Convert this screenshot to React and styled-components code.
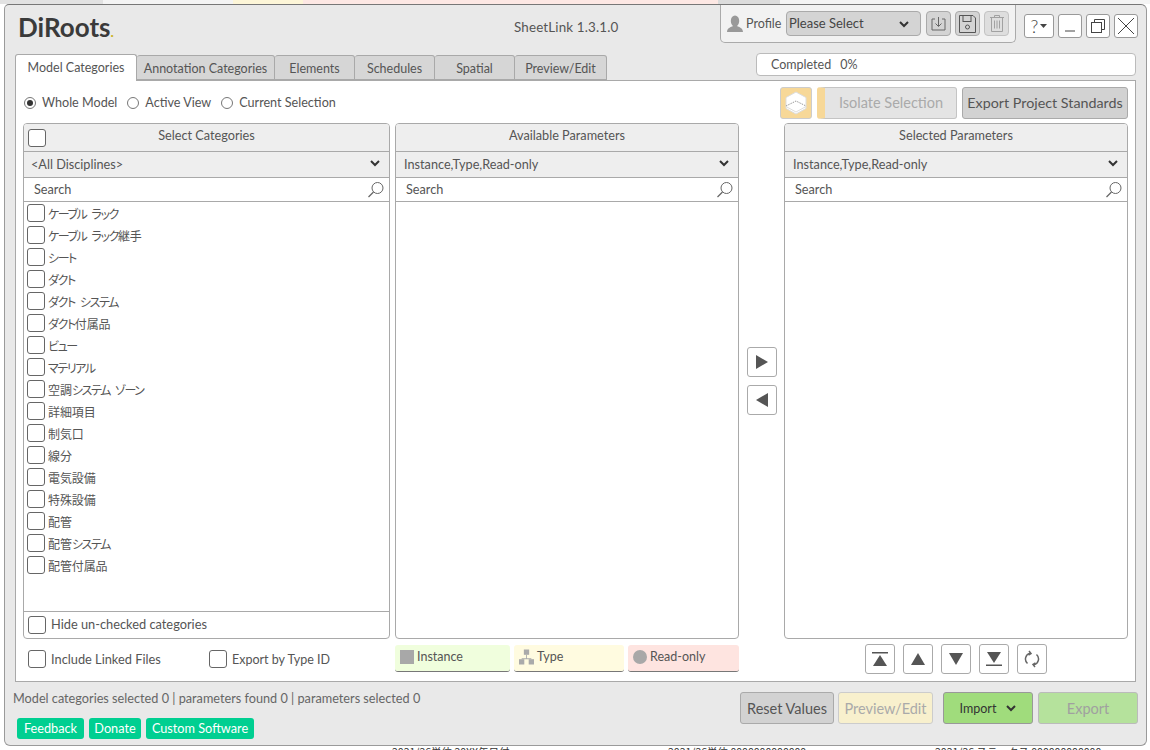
import React from "react";
import styled, { createGlobalStyle } from "styled-components";

const Global = createGlobalStyle`
  html, body { margin: 0; padding: 0; height: 750px; overflow: hidden; background: #fff; }
  body { font-family: "Lato", "Noto Sans CJK JP", sans-serif; font-size: 12.5px; color: #555; }
  * { box-sizing: border-box; }
`;

const Page = styled.div`
  width: 1150px; height: 750px; overflow: hidden; display: flex; flex-direction: column; background: #fff;
`;
const TopStrip = styled.div`display: flex; height: 4px; flex: none; background: #f4f4f4;`;
const StripPart = styled.div`
  flex: none; width: ${p => p.$w}px; background: ${p => p.$c};
`;
const Body = styled.div`flex: none; height: 742px; padding-left: 4px; background: #fff; position: relative;`;
const BottomStrip = styled.div`
  flex: none; height: 4px; overflow: hidden; display: flex; font: 10.500px/12px "Noto Sans CJK JP", sans-serif; color: #333;
  padding-left: 392px; white-space: nowrap;
`;
const StripText = styled.span`flex: none; width: ${p => p.$w}px;`;
const Window = styled.div`
  width: 1143px; height: 742px; background: #e9e9e9; border: 1px solid #9a9a9a; border-top-color: #777;
  border-radius: 5px 6px 6px 6px; display: flex; flex-direction: column; padding: 0 10px 0 10px;
`;
const TitleRow = styled.div`display: flex; align-items: flex-start; height: 48px; flex: none;`;
const Logo = styled.div`
  width: 499px; flex: none; padding: 7px 0 0 3px; font: 700 26px/30px "Lato", sans-serif; color: #3a3a3a;
  span { color: #c9b21e; font-size: 14px; }
`;
const AppTitle = styled.div`width: 206px; flex: none; font-size: 13.4px; color: #555; padding-top: 14px; letter-spacing: .15px;`;
const ProfileBox = styled.div`
  flex: none; width: 296px; height: 38px; border: 1px solid #aaa; border-top: none; border-radius: 0 0 5px 5px;
  background: #f2f2f2; display: flex; align-items: center; padding: 0 0 0 5px;
`;
const ProfileLabel = styled.span`margin-left: 2px; width: 38px; font-size: 12.5px; color: #555;`;
const ProfileSelect = styled.div`
  width: 135px; height: 25px; margin-left: 2px; margin-right: 5px; background: #d4d4d4; border: 1px solid #aaa; border-radius: 4px;
  display: flex; align-items: center; justify-content: space-between; padding: 0 11px 2px 2px; color: #444; font-size: 13px;
  svg { margin-top: 3px; }
`;
const SquareBtn = styled.div`
  width: 25px; height: 25px; margin-right: 4px; background: #d4d4d4; border: 1px solid #aaa; border-radius: 4px;
  display: flex; align-items: center; justify-content: center; opacity: ${p => p.$off ? .65 : 1};
`;
const WinControls = styled.div`display: flex; gap: 4px; margin: 9px 0 0 8px; flex: none;`;
const WinBtn = styled.div`
  width: ${p => p.$w || 24}px; height: 24px; background: #fff; border: 1px solid #999; border-radius: 3px;
  display: flex; align-items: center; justify-content: center; gap: 2px; font-size: 18px; font-weight: 300; color: #444;
`;
const TabRow = styled.div`display: flex; height: 27px; flex: none; align-items: flex-end; justify-content: space-between;`;
const Tabs = styled.div`display: flex; align-items: flex-end; height: 27px;`;
const Tab = styled.div`
  width: ${p => p.$w}px; height: ${p => p.$on ? 27 : 25}px; display: flex; align-items: center; justify-content: center;
  background: ${p => p.$on ? "#fff" : "#d6d6d6"}; border: 1px solid #a9a9a9; border-bottom: ${p => p.$on ? "none" : "1px solid #a9a9a9"};
  border-left: ${p => p.$first ? "1px solid #a9a9a9" : "none"}; border-radius: 3px 3px 0 0; font-size: 12.5px; color: #555;
  margin-bottom: ${p => p.$on ? -1 : 0}px; position: relative; z-index: ${p => p.$on ? 2 : 0}; padding-top: ${p => p.$on ? 0 : 2}px; padding-bottom: ${p => p.$on ? 2 : 0}px;
`;
const Progress = styled.div`
  width: 380px; height: 23px; margin-bottom: 4px; background: #fff; border: 1px solid #bbb; border-radius: 4px;
  padding: 0 14px; display: flex; align-items: center; gap: 9px; font-size: 12.5px; color: #555;
`;
const Panel = styled.div`
  width: 1121px; height: 602px; flex: none; background: #fff; border: 1px solid #a9a9a9; padding: 6px 7px 0 7px; display: flex; flex-direction: column;
`;
const ToolRow = styled.div`display: flex; align-items: center; justify-content: space-between; height: 32px; flex: none;`;
const Radios = styled.div`display: flex; align-items: center; gap: 10px; padding-left: 1px; margin-top: -1px;`;
const RadioItem = styled.label`display: flex; align-items: center; gap: 6px; color: #555; font-size: 12.6px;`;
const RadioDot = styled.span`
  width: 12px; height: 12px; border-radius: 50%; border: 1px solid #777; background: #fff; display: flex; align-items: center; justify-content: center; margin-top: 1px;
  &::after { content: ""; width: 6px; height: 6px; border-radius: 50%; background: ${p => p.$on ? "#333" : "transparent"}; }
`;
const ToolBtns = styled.div`display: flex; gap: 5px;`;
const HexBtn = styled.div`
  width: 32px; height: 32px; background: #f7d898; border: 1px solid #ccc; border-radius: 3px; display: flex; align-items: center; justify-content: center;
`;
const IsolateBtn = styled.div`
  width: 140px; height: 32px; border: 1px solid #c4c4c4; border-radius: 3px; background: #e4e4e4; color: #aaa; font-size: 14.5px;
  border-left: 8px solid #f7d898; display: flex; align-items: center; justify-content: center; padding: 0 0 2px 1px;
`;
const GrayBtn = styled.div`
  width: ${p => p.$w}px; height: 32px; border: 1px solid #aaa; border-radius: 3px; background: #d2d2d2; color: #555; font-size: 14.3px;
  display: flex; align-items: center; justify-content: center; padding-bottom: 2px;
`;
const Columns = styled.div`display: flex; height: 516px; margin-top: 4px; flex: none;`;
const ListBox = styled.div`
  width: ${p => p.$w}px; margin-right: ${p => p.$mr || 0}px; flex: none; height: 516px; border: 1px solid #a9a9a9; border-radius: 4px; display: flex; flex-direction: column; overflow: hidden;
`;
const ListHead = styled.div`
  height: 28px; flex: none; background: #eee; border-bottom: 1px solid #a9a9a9; display: flex; align-items: center; justify-content: center; color: #555; font-size: 12.7px; position: relative; padding-bottom: 5px;
`;
const HeadCheck = styled.div`position: absolute; left: 4px; top: 5px;`;
const Filter = styled.div`
  height: 26px; flex: none; background: #eee; border-bottom: 1px solid #a9a9a9; display: flex; align-items: center; justify-content: space-between; padding: 0 9px 2px ${p => p.$pl}px; color: #555; font-size: 12.7px;
`;
const SearchRow = styled.div`
  height: 24px; flex: none; background: #fff; border-bottom: 1px solid #a9a9a9; display: flex; align-items: center; justify-content: space-between; padding: 0 4px 2px 10px; color: #555; font-size: 12.7px;
  svg { margin-top: 2px; }
`;
const ListBody = styled.div`flex: 1; padding: 0 3px 0; overflow: hidden;`;
const Item = styled.div`height: 22px; display: flex; align-items: center; gap: 3px; font-family: "Noto Sans CJK JP", sans-serif; font-feature-settings: "palt"; font-weight: 400; font-size: 12px; color: #555; letter-spacing: -.1px;`;
const ItemLabel = styled.span`white-space: pre;`;
const Kana = styled.span`letter-spacing: -1.4px;`;
const WordGap = styled.span`display: inline-block; width: 5px;`;
const Check = styled.span`
  display: block; flex: none; width: 18px; height: 18px; background: #fff; border: 1px solid #666; border-radius: 3px;
`;
const ListFoot = styled.div`height: 27px; flex: none; border-top: 1px solid #a9a9a9; display: flex; align-items: center; gap: 5px; padding: 0 4px; color: #555; font-size: 12.8px;`;
const FootLabel = styled.span`margin-top: -2px;`;
const Arrows = styled.div`width: 45px; flex: none; display: flex; flex-direction: column; align-items: center; padding-top: 224px; gap: 8px;`;
const IconBtn = styled.div`
  width: 30px; height: 30px; background: #fff; border: 1px solid #aaa; border-radius: 3px; display: flex; align-items: center; justify-content: center; flex: none;
`;
const BottomRow = styled.div`display: flex; margin-top: 5px; height: 30px; flex: none;`;
const Options = styled.div`width: 372px; flex: none; display: flex; align-items: center; padding-left: 5px;`;
const OptionItem = styled.div`width: ${p => p.$w}px; flex: none; display: flex; align-items: center; gap: 5px; color: #555; font-size: ${p => p.$fs}px;`;
const Legend = styled.div`width: 344px; flex: none; height: 27px; display: flex; gap: 4px; margin-top: 1px;`;
const LegendItem = styled.div`
  width: ${p => p.$w}px; height: 27px; background: ${p => p.$c}; border-radius: 3px; border-bottom: 1px solid #777; padding: 4px 0 0 5px; display: flex; align-items: flex-start; gap: 3px; color: #555; font-size: 12.5px;
`;
const Movers = styled.div`flex: 1; display: flex; gap: 8px; padding-left: 126px;`;
const Status = styled.div`flex: none; height: 20px; margin: 6px 0 0 -2px; display: flex; align-items: center; color: #666; font-size: 12.7px;`;
const FootRow = styled.div`flex: none; display: flex; justify-content: space-between; height: 47px; margin-top: -16px;`;
const Pills = styled.div`display: flex; gap: 5px; padding: 26px 0 0 2px;`;
const Pill = styled.div`
  height: 21px; width: ${p => p.$w}px; background: #00cf91; color: #fff; border-radius: 3px; font-size: 12.7px; display: flex; align-items: center; justify-content: center; padding-bottom: 1px;
`;
const Actions = styled.div`display: flex; margin-right: -2px; height: 32px;`;
const ActionBtn = styled.div`
  width: ${p => p.$w}px; margin-right: ${p => p.$mr || 0}px; height: 32px; background: ${p => p.$bg}; color: ${p => p.$fg}; border: 1px solid ${p => p.$bd}; border-radius: 3px;
  display: flex; align-items: center; justify-content: center; gap: 10px; font-size: ${p => p.$fs || 14.5}px;
`;

const Chevron = () => (
  <svg width="10" height="7" viewBox="0 0 10 7"><polyline points="1,1 5,5 9,1" fill="none" stroke="#333" strokeWidth="2" /></svg>
);
const SearchIcon = () => (
  <svg width="18" height="18" viewBox="0 0 18 18" fill="none" stroke="#666" strokeWidth="1"><circle cx="10.5" cy="7" r="5.5" /><line x1="6.5" y1="11" x2="1.5" y2="16" strokeWidth="1.3" /></svg>
);
const PersonIcon = () => (
  <svg width="18" height="18" viewBox="0 0 18 18" fill="#999"><ellipse cx="9" cy="6" rx="4.2" ry="5.5" /><path d="M1 17c0-4 4-5 6-6h4c2 1 6 2 6 6z" /></svg>
);
const ImportIcon = () => (
  <svg width="17" height="17" viewBox="0 0 17 17" fill="none" stroke="#666"><path d="M5 4H2v11h13V4h-3M8.5 2v9M5.5 8.5l3 3 3-3" /></svg>
);
const SaveIcon = () => (
  <svg width="19" height="20" viewBox="0 0 19 20" fill="none" stroke="#555"><path d="M2 1.5h13l2.5 2.5v14.5H1.500V1.500z" /><rect x="5" y="1.500" width="8" height="6" /><circle cx="9.500" cy="13" r="2" /></svg>
);
const TrashIcon = () => (
  <svg width="16" height="19" viewBox="0 0 16 19" fill="none" stroke="#777"><path d="M1 3.500h14M5.500 3.500v-2h5v2M2.500 3.500v14h11v-14M5.500 6.500v8M8 6.500v8M10.500 6.500v8" /></svg>
);
const HexIcon = () => (
  <svg width="22" height="24" viewBox="0 0 22 24"><path d="M11 1l10 5.500v11L11 23 1 17.500v-11z" fill="#fff" stroke="#ddd" /><path d="M1 15l10-5 10 5" fill="none" stroke="#999" strokeDasharray="1.500 1" /><path d="M1 15.500l10 5.500 10-5.500" fill="none" stroke="#ddd" /></svg>
);
const Tri = ({ dir }) => {
  const pts = { up: "1,14 15,14 8,2", down: "1,2 15,2 8,14", right: "2,1 14,8 2,15", left: "14,1 2,8 14,15" }[dir];
  return <svg width="16" height="16" viewBox="0 0 16 16"><polygon points={pts} fill="#555" /></svg>;
};
const TopIcon = () => (
  <svg width="20" height="20" viewBox="0 0 20 20" fill="#555"><rect x="2" y="3" width="16" height="1.500" /><polygon points="3,17 17,17 10,6" /></svg>
);
const BottomIcon = () => (
  <svg width="20" height="20" viewBox="0 0 20 20" fill="#555"><rect x="2" y="15.500" width="16" height="1.500" /><polygon points="3,3 17,3 10,14" /></svg>
);
const RefreshIcon = () => (
  <svg width="16" height="18" viewBox="0 0 16 18" fill="none" stroke="#666" strokeWidth="1.500"><path d="M3.500 13.500A6 6 0 0 1 6 3.200" /><path d="M12.500 4.500A6 6 0 0 1 10 14.800" /><path d="M5 1l2 2.500L4.500 5M11 17l-2-2.500 2.500-1.500" /></svg>
);
const TypeIcon = () => (
  <svg width="15" height="16" viewBox="0 0 17 17" fill="#aaa"><rect x="5.500" y="0" width="6" height="6" /><rect x="0" y="11" width="6" height="6" /><rect x="11" y="11" width="6" height="6" /><path d="M8 6h1v4h5v1H3v-1h5z" /></svg>
);
const Swatch = styled.span`display: block; width: 14px; height: 14px; margin-top: 1px; background: #a8a8a8; border-radius: ${p => p.$round ? "50%" : "0"};`;

const categories = ["ケーブル ラック", "ケーブル ラック継手", "シート", "ダクト", "ダクト システム", "ダクト付属品", "ビュー", "マテリアル", "空調システム ゾーン", "詳細項目", "制気口", "線分", "電気設備", "特殊設備", "配管", "配管システム", "配管付属品"];
const tabs = [["Model Categories", 122], ["Annotation Categories", 138], ["Elements", 80], ["Schedules", 80], ["Spatial", 80], ["Preview/Edit", 92]];

const CategoryLabel = ({ text }) => (
  <ItemLabel>
    {text.split(/([\u30A0-\u30FF]+)/).map((part, i) => {
      if (i % 2) return <Kana key={i}>{part}</Kana>;
      return part === " " ? <WordGap key={i}>{" "}</WordGap> : part;
    })}
  </ItemLabel>
);

const ParamList = ({ title, w, mr }) => (
  <ListBox $w={w} $mr={mr}>
    <ListHead>{title}</ListHead>
    <Filter $pl={8}>Instance,Type,Read-only<Chevron /></Filter>
    <SearchRow>Search<SearchIcon /></SearchRow>
    <ListBody />
  </ListBox>
);

export default function App() {
  return (
    <Page>
      <Global />
      <TopStrip>
        <StripPart $w={103} $c="#e2e2e2" />
        <StripPart $w={130} $c="#f4f4f4" />
        <StripPart $w={70} $c="#fdf6d8" />
        <StripPart $w={415} $c="#fde8e4" />
        <StripPart $w={62} $c="#dcdcdc" />
      </TopStrip>
      <Body>
        <Window>
          <TitleRow>
            <Logo>DiRoots<span>.</span></Logo>
            <AppTitle>SheetLink 1.3.1.0</AppTitle>
            <ProfileBox>
              <PersonIcon />
              <ProfileLabel>Profile</ProfileLabel>
              <ProfileSelect>Please Select<Chevron /></ProfileSelect>
              <SquareBtn><ImportIcon /></SquareBtn>
              <SquareBtn><SaveIcon /></SquareBtn>
              <SquareBtn $off><TrashIcon /></SquareBtn>
            </ProfileBox>
            <WinControls>
              <WinBtn $w={30}>?<svg width="7" height="4" viewBox="0 0 7 4"><polygon points="0,0 7,0 3.500,4" fill="#444" /></svg></WinBtn>
              <WinBtn><svg width="12" height="12" viewBox="0 0 12 12"><line x1="1" x2="11" y1="11" y2="11" stroke="#444" /></svg></WinBtn>
              <WinBtn><svg width="16" height="16" viewBox="0 0 16 16" fill="none" stroke="#444"><rect x="1.500" y="4.500" width="10" height="10" /><path d="M4.500 4.500v-3h10v10h-3" /></svg></WinBtn>
              <WinBtn><svg width="18" height="18" viewBox="0 0 18 18" stroke="#444"><path d="M1 1l16 16M17 1L1 17" /></svg></WinBtn>
            </WinControls>
          </TitleRow>
          <TabRow>
            <Tabs>
              {tabs.map(([t, w], i) => <Tab key={t} $w={w} $on={i === 0} $first={i === 0}>{t}</Tab>)}
            </Tabs>
            <Progress><span>Completed</span><span>0%</span></Progress>
          </TabRow>
          <Panel>
            <ToolRow>
              <Radios>
                <RadioItem><RadioDot $on />Whole Model</RadioItem>
                <RadioItem><RadioDot />Active View</RadioItem>
                <RadioItem><RadioDot />Current Selection</RadioItem>
              </Radios>
              <ToolBtns>
                <HexBtn><HexIcon /></HexBtn>
                <IsolateBtn>Isolate Selection</IsolateBtn>
                <GrayBtn $w={166}>Export Project Standards</GrayBtn>
              </ToolBtns>
            </ToolRow>
            <Columns>
              <ListBox $w={367} $mr={5}>
                <ListHead><HeadCheck><Check /></HeadCheck>Select Categories</ListHead>
                <Filter $pl={7}>&lt;All Disciplines&gt;<Chevron /></Filter>
                <SearchRow>Search<SearchIcon /></SearchRow>
                <ListBody>{categories.map(c => <Item key={c}><Check /><CategoryLabel text={c} /></Item>)}</ListBody>
                <ListFoot><Check /><FootLabel>Hide un-checked categories</FootLabel></ListFoot>
              </ListBox>
              <ParamList title="Available Parameters" w={344} />
              <Arrows>
                <IconBtn><Tri dir="right" /></IconBtn>
                <IconBtn><Tri dir="left" /></IconBtn>
              </Arrows>
              <ParamList title="Selected Parameters" w={344} />
            </Columns>
            <BottomRow>
              <Options>
                <OptionItem $w={181} $fs={12.8}><Check />Include Linked Files</OptionItem>
                <OptionItem $w={150} $fs={12.5}><Check />Export by Type ID</OptionItem>
              </Options>
              <Legend>
                <LegendItem $w={115} $c="#f0fedd"><Swatch />Instance</LegendItem>
                <LegendItem $w={110} $c="#fffbe0"><TypeIcon />Type</LegendItem>
                <LegendItem $w={111} $c="#fee4e0"><Swatch $round />Read-only</LegendItem>
              </Legend>
              <Movers>
                <IconBtn><TopIcon /></IconBtn>
                <IconBtn><Tri dir="up" /></IconBtn>
                <IconBtn><Tri dir="down" /></IconBtn>
                <IconBtn><BottomIcon /></IconBtn>
                <IconBtn><RefreshIcon /></IconBtn>
              </Movers>
            </BottomRow>
          </Panel>
          <Status>Model categories selected 0 | parameters found 0 | parameters selected 0</Status>
          <FootRow>
            <Pills>
              <Pill $w={67}>Feedback</Pill>
              <Pill $w={52}>Donate</Pill>
              <Pill $w={108}>Custom Software</Pill>
            </Pills>
            <Actions>
              <ActionBtn $w={94} $mr={4} $bg="#d2d2d2" $fg="#555" $bd="#aaa">Reset Values</ActionBtn>
              <ActionBtn $w={95} $mr={10} $bg="#f8f0cd" $fg="#aaa" $bd="#ccc">Preview/Edit</ActionBtn>
              <ActionBtn $w={90} $mr={5} $bg="#a0dc7c" $fg="#333" $bd="#999" $fs={12.5}>Import<Chevron /></ActionBtn>
              <ActionBtn $w={100} $bg="#b5e29c" $fg="#a0a0a0" $bd="#bbb">Export</ActionBtn>
            </Actions>
          </FootRow>
        </Window>
      </Body>
      <BottomStrip>
        <StripText $w={276}>2021/26単位 20XX年日付</StripText>
        <StripText $w={267}>2021/26単位 0000000000000</StripText>
        <StripText $w={190}>2021/26 ステータス 000000000000</StripText>
      </BottomStrip>
    </Page>
  );
}
